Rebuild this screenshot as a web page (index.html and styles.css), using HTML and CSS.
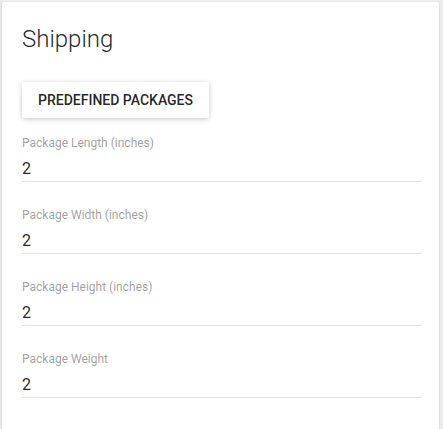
FILE: index.html
```html
<!DOCTYPE html>
<html>
<head>
<meta charset="utf-8">
<link rel="stylesheet" href="styles.css">
</head>
<body>
<div class="card">
  <h2 class="title">Shipping</h2>
  <button class="btn">PREDEFINED PACKAGES</button>
  <div class="fields">
    <div class="field">
      <div class="label">Package Length (inches)</div>
      <div class="value">2</div>
    </div>
    <div class="field">
      <div class="label">Package Width (inches)</div>
      <div class="value">2</div>
    </div>
    <div class="field">
      <div class="label">Package Height (inches)</div>
      <div class="value">2</div>
    </div>
    <div class="field">
      <div class="label">Package Weight</div>
      <div class="value">2</div>
    </div>
  </div>
</div>
</body>
</html>
```
FILE: styles.css
```css
html, body {
  margin: 0;
  padding: 0;
  background: #eeeeee;
  height: 100%;
  overflow: hidden;
}
body {
  font-family: Roboto, "Liberation Sans", sans-serif;
  padding: 2px 4px 0 2px;
  box-sizing: border-box;
}
.card {
  background: #fff;
  box-shadow: 0 1px 3px rgba(0,0,0,0.12), 0 1px 2px rgba(0,0,0,0.10);
  border-radius: 2px 2px 0 0;
  padding: 21px 17px 0 20px;
  height: 100%;
  box-sizing: border-box;
}
.title {
  margin: 0;
  font-size: 24px;
  font-weight: 300;
  line-height: 32px;
  color: rgba(0,0,0,0.87);
}
.btn {
  margin-top: 27px;
  height: 36px;
  padding: 0 16px;
  border: none;
  border-radius: 2px;
  background: #fff;
  font-family: Roboto, "Liberation Sans", sans-serif;
  font-size: 14px;
  font-weight: 500;
  color: rgba(0,0,0,0.87);
  box-shadow: 0 1px 6px rgba(0,0,0,0.12), 0 1px 4px rgba(0,0,0,0.12);
  display: block;
}
.fields {
  margin-top: 17px;
  display: flex;
  flex-direction: column;
  gap: 25px;
}
.field {
  border-bottom: 1px solid #e0e0e0;
}
.label {
  font-size: 12px;
  line-height: 16px;
  color: rgba(0,0,0,0.40);
}
.value {
  padding-top: 6px;
  font-size: 16px;
  line-height: 24px;
  color: rgba(0,0,0,0.87);
}
```
